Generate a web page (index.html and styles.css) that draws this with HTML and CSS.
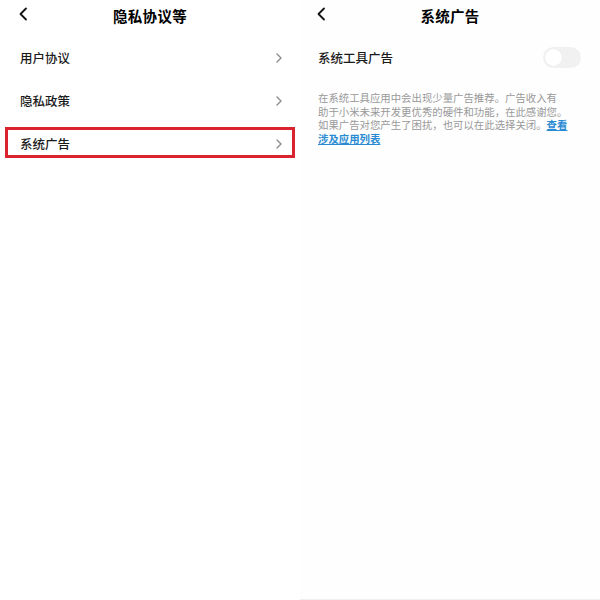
FILE: index.html
```html
<!DOCTYPE html>
<html lang="zh-CN">
<head>
<meta charset="utf-8">
<title>隐私协议等</title>
<link rel="stylesheet" href="styles.css">
</head>
<body>
<div class="screens">
  <section class="screen screen-list">
    <header class="topbar">
      <svg class="back" width="10" height="14" viewBox="0 0 10 14"><path d="M8 1.5 L2.5 7 L8 12.5" fill="none" stroke="#111" stroke-width="1.8" stroke-linecap="round" stroke-linejoin="round"/></svg>
      <h1 class="title">隐私协议等</h1>
    </header>
    <ul class="menu">
      <li class="menu-item"><span>用户协议</span><svg class="chev" width="8" height="12" viewBox="0 0 8 12"><path d="M2 2 L6 6 L2 10" fill="none" stroke="#8a8a8a" stroke-width="1.3" stroke-linecap="round" stroke-linejoin="round"/></svg></li>
      <li class="menu-item"><span>隐私政策</span><svg class="chev" width="8" height="12" viewBox="0 0 8 12"><path d="M2 2 L6 6 L2 10" fill="none" stroke="#8a8a8a" stroke-width="1.3" stroke-linecap="round" stroke-linejoin="round"/></svg></li>
      <li class="menu-item is-marked"><span>系统广告</span><svg class="chev" width="8" height="12" viewBox="0 0 8 12"><path d="M2 2 L6 6 L2 10" fill="none" stroke="#8a8a8a" stroke-width="1.3" stroke-linecap="round" stroke-linejoin="round"/></svg></li>
    </ul>
  </section>
  <section class="screen screen-detail">
    <header class="topbar">
      <svg class="back" width="10" height="14" viewBox="0 0 10 14"><path d="M8 1.5 L2.5 7 L8 12.5" fill="none" stroke="#111" stroke-width="1.8" stroke-linecap="round" stroke-linejoin="round"/></svg>
      <h1 class="title">系统广告</h1>
    </header>
    <div class="setting">
      <span>系统工具广告</span>
      <span class="switch"><span class="knob"></span></span>
    </div>
    <p class="note">在系统工具应用中会出现少量广告推荐。广告收入有<br>助于小米未来开发更优秀的硬件和功能，在此感谢您。<br>如果广告对您产生了困扰，也可以在此选择关闭。<a class="link" href="#">查看<br>涉及应用列表</a></p>
  </section>
</div>
</body>
</html>
```
FILE: styles.css
```css
* { box-sizing: border-box; }

html, body {
  margin: 0;
  padding: 0;
  background: #fff;
}

body {
  font-family: "Noto Sans CJK SC", "Noto Sans", sans-serif;
  color: #1a1a1a;
}

.screens {
  display: flex;
  width: 600px;
  height: 600px;
}

.screen {
  width: 300px;
  height: 600px;
}

.screen-detail {
  background: #fefefe;
  border-bottom: 1px solid #efefef;
}

.topbar {
  position: relative;
  height: 30px;
  display: flex;
  align-items: center;
  justify-content: center;
}

.back {
  position: absolute;
  left: 18px;
  top: 7px;
}

.screen-detail .back { left: 16px; }

.title {
  margin: 0;
  font-size: 14.5px;
  font-weight: 700;
  color: #000;
  letter-spacing: 0.3px;
}

.menu {
  list-style: none;
  margin: 0;
  padding: 6px 0 0;
}

.menu-item {
  position: relative;
  height: 43px;
  display: flex;
  align-items: center;
  justify-content: space-between;
  padding: 0 17px 0 20px;
  font-size: 12.5px;
  font-weight: 500;
}

.menu-item.is-marked::after {
  content: "";
  position: absolute;
  left: 5px;
  right: 5px;
  top: 5px;
  bottom: 7px;
  border: 3px solid #d9242f;
}

.setting {
  height: 43px;
  margin-top: 6px;
  display: flex;
  align-items: center;
  justify-content: space-between;
  padding: 0 19px 0 18px;
  font-size: 12.5px;
  font-weight: 500;
}

.switch {
  width: 38px;
  height: 21px;
  border-radius: 11px;
  background: #f1f1f1;
  display: flex;
  align-items: center;
  padding-left: 2px;
}

.knob {
  width: 17px;
  height: 17px;
  border-radius: 50%;
  background: #fff;
  box-shadow: 0 0 1px rgba(0, 0, 0, 0.08);
}

.note {
  margin: 12px 0 0;
  padding: 0 18px;
  font-size: 10.4px;
  line-height: 13.5px;
  color: #999;
  white-space: nowrap;
}

.link {
  color: #2a8bd2;
  font-weight: 700;
  text-decoration: underline;
}
```
